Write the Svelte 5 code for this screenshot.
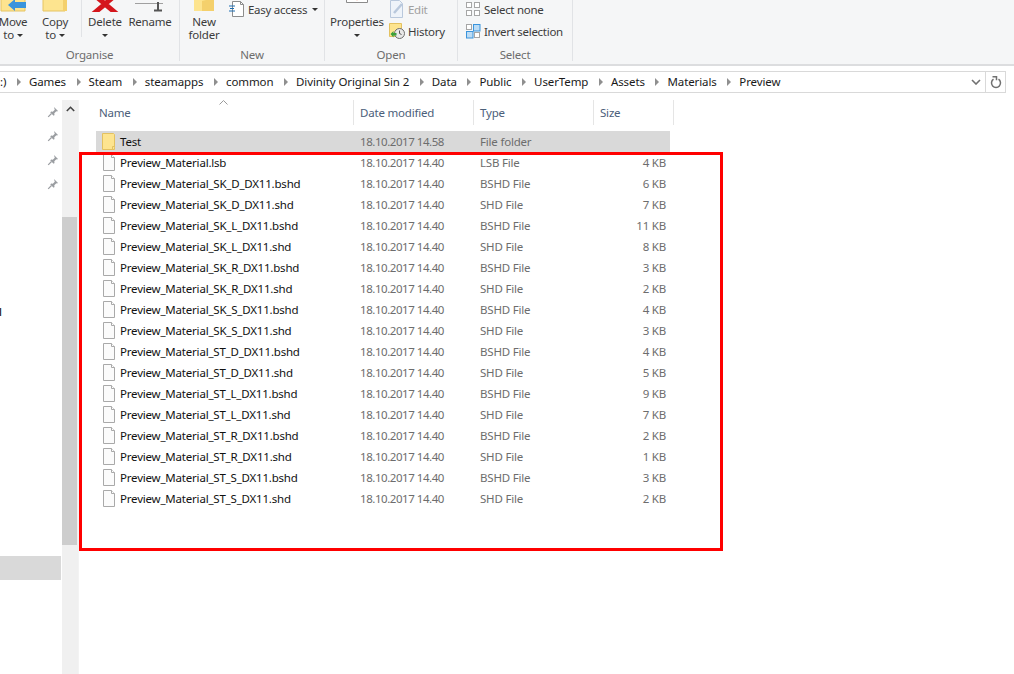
<script>
  const crumbs = ["Games", "Steam", "steamapps", "common", "Divinity Original Sin 2", "Data", "Public", "UserTemp", "Assets", "Materials", "Preview"];

  const files = [
    ["Preview_Material.lsb", "LSB File", 4],
    ["Preview_Material_SK_D_DX11.bshd", "BSHD File", 6],
    ["Preview_Material_SK_D_DX11.shd", "SHD File", 7],
    ["Preview_Material_SK_L_DX11.bshd", "BSHD File", 11],
    ["Preview_Material_SK_L_DX11.shd", "SHD File", 8],
    ["Preview_Material_SK_R_DX11.bshd", "BSHD File", 3],
    ["Preview_Material_SK_R_DX11.shd", "SHD File", 2],
    ["Preview_Material_SK_S_DX11.bshd", "BSHD File", 4],
    ["Preview_Material_SK_S_DX11.shd", "SHD File", 3],
    ["Preview_Material_ST_D_DX11.bshd", "BSHD File", 4],
    ["Preview_Material_ST_D_DX11.shd", "SHD File", 5],
    ["Preview_Material_ST_L_DX11.bshd", "BSHD File", 9],
    ["Preview_Material_ST_L_DX11.shd", "SHD File", 7],
    ["Preview_Material_ST_R_DX11.bshd", "BSHD File", 2],
    ["Preview_Material_ST_R_DX11.shd", "SHD File", 1],
    ["Preview_Material_ST_S_DX11.bshd", "BSHD File", 3],
    ["Preview_Material_ST_S_DX11.shd", "SHD File", 2]
  ];
</script>

{#snippet pin()}
  <svg width="12" height="12" viewBox="0 0 12 12">
    <path d="M7 1l4 4-1 .6-.7-.3-2 2 .2 1.700-.8.8L3.300 6.400l.8-.8 1.700.2 2-2-.3-.7z" fill="#9a9da1" />
    <path d="M4.500 7.500L1.200 10.800" stroke="#9a9da1" stroke-width="1.200" />
  </svg>
{/snippet}

{#snippet fileIcon()}
  <svg width="14" height="17" viewBox="0 0 14 17">
    <path d="M1.500 .5h8l3 3v13h-11z" fill="#fbfbfb" stroke="#a9a9a9" />
    <path d="M9.500 .5v3h3" fill="#fff" stroke="#a9a9a9" />
  </svg>
{/snippet}

<div class="window">
  <div class="ribbon">
    <section class="group organise">
      <div class="body">
        <div class="big move">
          <svg width="32" height="32" viewBox="0 0 32 32">
            <path d="M4 4h24v27H4z" fill="#fde48f" stroke="#e6c463" />
            <path d="M29 22h-11v-3l-7 6 7 6v-3h11z" fill="#3a94dc" />
          </svg>
          <div class="label"><span>Move</span><span>to <i class="caret"></i></span></div>
        </div>
        <div class="big copy">
          <svg width="32" height="32" viewBox="0 0 32 32">
            <path d="M4 4h22v27H4z" fill="#fde48f" stroke="#e6c463" />
            <path d="M26 4v27" stroke="#f4d06c" stroke-width="4" />
          </svg>
          <div class="label"><span>Copy</span><span>to <i class="caret"></i></span></div>
        </div>
        <div class="vsep"></div>
        <div class="big delete">
          <svg width="32" height="32" viewBox="0 0 32 32">
            <path d="M3 13l13 11L29 13M3 35l13-11 13 11" fill="none" stroke="#d4161c" stroke-width="5" />
          </svg>
          <div class="label"><span>Delete</span><span><i class="caret"></i></span></div>
        </div>
        <div class="big rename">
          <svg width="32" height="32" viewBox="0 0 32 32">
            <path d="M1 23.500h28" stroke="#a0a0a0" />
            <path d="M24 22v8M20 30.500h8" stroke="#555" stroke-width="2" />
          </svg>
          <div class="label"><span>Rename</span><span></span></div>
        </div>
      </div>
      <div class="title">Organise</div>
    </section>

    <section class="group new">
      <div class="body">
        <div class="big newfolder">
          <svg width="32" height="32" viewBox="0 0 32 32">
            <path d="M6 4h17v17l-5 10H6z" fill="#fde48f" />
            <path d="M14 21l12-3v13H14z" fill="#f4d06c" />
          </svg>
          <div class="label"><span>New</span><span>folder</span></div>
        </div>
        <div class="small-col">
          <div class="small">
            <svg width="16" height="16" viewBox="0 0 16 16">
              <path d="M3.500 .5h8l3 3v12h-11z" fill="#fff" stroke="#8d8d8d" />
              <path d="M11.500 .5v3h3" fill="none" stroke="#8d8d8d" />
              <path d="M0 5h6M1 7.500h4M0 10h6" stroke="#1e6fb3" />
            </svg>
            <span>Easy access</span><i class="caret"></i>
          </div>
        </div>
      </div>
      <div class="title">New</div>
    </section>

    <section class="group open">
      <div class="body">
        <div class="big properties">
          <svg width="32" height="32" viewBox="0 0 32 32">
            <path d="M5.500 0v22.500h21V0" fill="#fff" stroke="#8b8b8b" />
            <path d="M16 12.500l4 4-4 4-4-4z" fill="#f0622d" />
          </svg>
          <div class="label"><span>Properties</span><span><i class="caret"></i></span></div>
        </div>
        <div class="small-col">
          <div class="small dim">
            <svg width="16" height="18" viewBox="0 0 16 18">
              <path d="M1.500 .5h9l3 3v14h-12z" fill="#eef3f9" stroke="#b9c8dc" />
              <path d="M5 13L13 4" stroke="#b9c8dc" stroke-width="2.500" />
            </svg>
            <span>Edit</span>
          </div>
          <div class="small">
            <svg width="16" height="16" viewBox="0 0 16 16">
              <path d="M.5 .5h12v13H.5z" fill="#fde48f" stroke="#e3c160" />
              <circle cx="10.500" cy="10.500" r="5" fill="#e8e8e8" stroke="#6d6d6d" />
              <path d="M10.500 7.500v3l2 1" fill="none" stroke="#555" />
              <path d="M1.500 11l3-3v2h3v2.500h-3v2z" fill="#3aa03a" />
            </svg>
            <span>History</span>
          </div>
        </div>
      </div>
      <div class="title">Open</div>
    </section>

    <section class="group select">
      <div class="body">
        <div class="small-col">
          <div class="small">
            <svg width="16" height="16" viewBox="0 0 16 16" fill="#fff" stroke="#a6a6a6">
              <rect x="1.500" y="1.500" width="5" height="5" />
              <rect x="9.500" y="1.500" width="5" height="5" />
              <rect x="1.500" y="9.500" width="5" height="5" />
              <rect x="9.500" y="9.500" width="5" height="5" />
            </svg>
            <span>Select none</span>
          </div>
          <div class="small">
            <svg width="16" height="16" viewBox="0 0 16 16">
              <rect x="1.500" y="1.500" width="5" height="5" fill="#fff" stroke="#a6a6a6" />
              <rect x="8.500" y="1.500" width="6.500" height="6.500" fill="#bcdcf5" stroke="#3a94dc" />
              <rect x="1.500" y="8.500" width="6.500" height="6.500" fill="#bcdcf5" stroke="#3a94dc" />
              <rect x="9.500" y="9.500" width="5" height="5" fill="#fff" stroke="#a6a6a6" />
            </svg>
            <span>Invert selection</span>
          </div>
        </div>
      </div>
      <div class="title">Select</div>
    </section>
  </div>

  <div class="address">
    <div class="crumbs">
      <span class="drive">:)</span>
      {#each crumbs as c}
        <svg class="chev" width="6" height="8" viewBox="0 0 6 8"><path d="M1 0l4 4-4 4z" fill="#8f8f8f" /></svg>
        <span>{c}</span>
      {/each}
    </div>
    <div class="drop">
      <svg width="10" height="6" viewBox="0 0 10 6"><path d="M1 1l4 4 4-4" fill="none" stroke="#707070" stroke-width="1.600" /></svg>
    </div>
    <div class="refresh">
      <svg width="12" height="13" viewBox="0 0 12 13">
        <path d="M3.500 3.200a4.500 4.500 0 1 0 5 0" fill="none" stroke="#707070" stroke-width="1.500" />
        <path d="M2.500 .8h4v3.500" fill="none" stroke="#707070" stroke-width="1.500" />
      </svg>
    </div>
  </div>

  <div class="main">
    <nav class="nav">
      <div class="pin">{@render pin()}</div>
      <div class="pin">{@render pin()}</div>
      <div class="pin">{@render pin()}</div>
      <div class="pin">{@render pin()}</div>
      <div class="clipped">l</div>
      <div class="current"></div>
    </nav>

    <div class="scrollbar">
      <div class="arrow">
        <svg width="9" height="6" viewBox="0 0 9 6"><path d="M.8 5l3.700-3.700L8.200 5" fill="none" stroke="#444" stroke-width="1.600" /></svg>
      </div>
      <div class="thumb"></div>
    </div>

    <div class="list">
      <div class="head">
        <svg class="sort" width="9" height="5" viewBox="0 0 9 5"><path d="M.5 4.500l4-4 4 4" fill="none" stroke="#9a9a9a" /></svg>
        <div class="col name">Name</div>
        <div class="col date">Date modified</div>
        <div class="col type">Type</div>
        <div class="col size">Size</div>
      </div>

      <div class="rows">
        <div class="row selected">
          <span class="icon">
            <svg width="14" height="17" viewBox="0 0 14 17">
              <path d="M.5 .5h11l1 1v15H.5z" fill="#fde48f" stroke="#e3c160" />
              <path d="M10.500 16.500v-3h2.500" fill="#fde48f" stroke="#e3c160" />
            </svg>
          </span>
          <span class="fname">Test</span>
          <span class="fdate">18.10.2017 14.58</span>
          <span class="ftype">File folder</span>
          <span class="fsize"></span>
        </div>
        {#each files as [name, type, kb]}
          <div class="row">
            <span class="icon">{@render fileIcon()}</span>
            <span class="fname">{name}</span>
            <span class="fdate">18.10.2017 14.40</span>
            <span class="ftype">{type}</span>
            <span class="fsize">{kb} KB</span>
          </div>
        {/each}
      </div>

      <div class="redbox"></div>
    </div>
  </div>
</div>

<style>
  :global(body) {
    margin: 0;
    background: #fff;
  }

  .window {
    width: 1014px;
    height: 674px;
    overflow: hidden;
    font-family: "Noto Sans", "Open Sans", sans-serif;
    font-size: 11.5px;
    letter-spacing: -0.2px;
    color: #1a1a1a;
  }

  /* ribbon */
  .ribbon {
    display: flex;
    height: 64px;
    background: #f5f6f7;
    border-bottom: 2px solid #dcdddf;
  }

  .group {
    display: flex;
    flex-direction: column;
    height: 61px;
    box-sizing: border-box;
    border-right: 1px solid #e1e3e6;
  }

  .organise { width: 180px; }
  .new { width: 145px; }
  .open { width: 133px; }
  .select { width: 115px; }

  .body {
    height: 47px;
    display: flex;
    align-items: flex-end;
    overflow: hidden;
    flex: none;
  }

  .title {
    text-align: center;
    color: #6d6d6d;
    line-height: 16px;
  }

  .big {
    display: flex;
    flex-direction: column;
    align-items: center;
    flex: none;
    padding-bottom: 6px;
    color: #3c3c3c;
  }

  .big svg {
    flex: none;
    margin-bottom: 3px;
  }

  .label {
    height: 26px;
    line-height: 13px;
    text-align: center;
    white-space: nowrap;
  }

  .label span {
    display: block;
    height: 13px;
  }

  .caret {
    display: inline-block;
    width: 0;
    height: 0;
    border-left: 3px solid transparent;
    border-right: 3px solid transparent;
    border-top: 3px solid #333;
    vertical-align: 2px;
  }

  .move { width: 26px; }
  .copy { width: 30px; margin-left: 14px; }
  .delete { width: 34px; }
  .rename { width: 40px; margin-left: 8px; }
  .newfolder { width: 48px; }
  .properties { width: 64px; }

  .vsep {
    align-self: flex-start;
    width: 1px;
    height: 37px;
    margin: 0 6px 0 11px;
    background: #e1e3e6;
  }

  .small-col {
    align-self: flex-start;
    display: flex;
    flex-direction: column;
    flex: none;
    margin-top: -2px;
  }

  .small {
    display: flex;
    align-items: center;
    gap: 3px;
    height: 22px;
    white-space: nowrap;
    color: #3c3c3c;
    letter-spacing: -0.28px;
  }

  .small .caret {
    margin-left: 2px;
    vertical-align: 0;
  }

  .dim { color: #a0a0a0; }
  .new .small-col { margin-left: 1px; }
  .select .small-col { margin-left: 7px; }

  /* address bar */
  .address {
    display: flex;
    align-items: stretch;
    height: 20px;
    margin: 5px 8px 0 -1px;
    border: 1px solid #d9d9d9;
    line-height: 19px;
  }

  .crumbs {
    flex: 1;
    display: flex;
    align-items: center;
    padding-bottom: 2px;
    overflow: hidden;
    white-space: nowrap;
    color: #1a1a1a;
    letter-spacing: -0.1px;
  }

  .chev {
    flex: none;
    margin: 2px 7px 0 9.6px;
  }

  .drop {
    width: 19px;
    display: flex;
    align-items: center;
    justify-content: center;
  }

  .refresh {
    width: 19px;
    display: flex;
    align-items: center;
    justify-content: center;
    border-left: 1px solid #d9d9d9;
  }

  /* main area */
  .main {
    display: flex;
    height: 581px;
    margin-top: 7px;
  }

  .nav {
    width: 62px;
    flex: none;
    display: flex;
    flex-direction: column;
  }

  .pin {
    height: 24px;
    display: flex;
    align-items: center;
    justify-content: flex-end;
    padding-right: 3px;
  }

  .clipped {
    height: 24px;
    margin-top: 104px;
    margin-left: -1px;
    line-height: 24px;
    color: #000;
  }

  .current {
    width: 61px;
    height: 24px;
    margin-top: 232px;
    background: #d9d9d9;
  }

  .scrollbar {
    width: 16px;
    flex: none;
    background: #f0f0f0;
    display: flex;
    flex-direction: column;
  }

  .arrow {
    height: 17px;
    display: flex;
    align-items: center;
    justify-content: center;
  }

  .thumb {
    height: 328px;
    width: 15px;
    margin-top: 100px;
    background: #cdcdcd;
  }

  .list {
    flex: 1;
    position: relative;
    border-left: 1px solid #f3f3f3;
  }

  .head {
    position: relative;
    display: flex;
    height: 25px;
    margin-left: 14px;
    color: #4c607a;
    line-height: 25px;
  }

  .sort {
    position: absolute;
    left: 126px;
    top: 0;
  }

  .col {
    box-sizing: border-box;
    padding-left: 6px;
    border-right: 1px solid #e5e5e5;
  }

  .name { width: 261px; }
  .date { width: 120px; }
  .type { width: 120px; }
  .size { width: 80px; }

  .rows {
    margin-top: 6px;
    margin-left: 17px;
    width: 574px;
  }

  .row {
    display: flex;
    align-items: center;
    height: 21px;
    color: #6d6d6d;
    white-space: nowrap;
  }

  .selected { background: #d9d9d9; }

  .icon {
    width: 24px;
    height: 17px;
    flex: none;
    padding-left: 6px;
    box-sizing: border-box;
  }

  .fname {
    width: 240px;
    flex: none;
    color: #111;
  }

  .fdate {
    width: 120px;
    flex: none;
    letter-spacing: -0.45px;
  }

  .ftype { width: 120px; flex: none; }

  .fsize {
    width: 66px;
    flex: none;
    text-align: right;
  }

  /* annotation drawn on the screenshot */
  .redbox {
    position: absolute;
    left: 0;
    top: 52px;
    width: 644px;
    height: 399px;
    box-sizing: border-box;
    border: 3px solid #ff0000;
    pointer-events: none;
  }
</style>
